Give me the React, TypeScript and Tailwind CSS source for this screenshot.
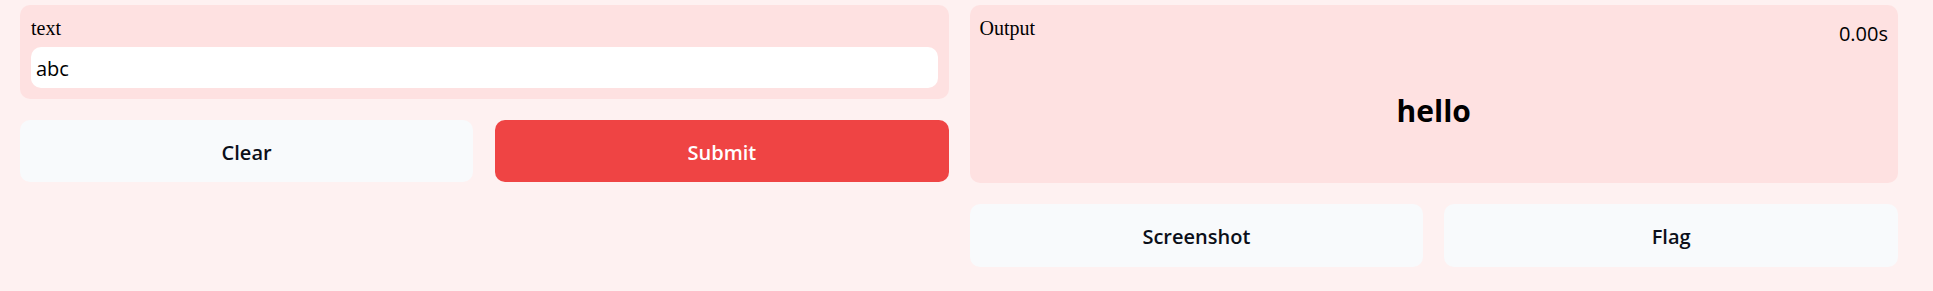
import React from 'react';

const sans = "font-['Open_Sans','Noto_Sans',sans-serif]";
const serif = "font-['Liberation_Serif','Times_New_Roman',serif]";

function Button({ label, primary, tall }: { label: string; primary?: boolean; tall?: boolean }) {
  return (
    <button
      className={`flex-1 ${tall ? 'h-[63px]' : 'h-[62px]'} rounded-[10px] pt-[3px] text-[20px] font-semibold ${sans} ${
        primary ? 'bg-[#ef4444] text-white' : 'bg-[#f8fafc] text-[#0b0f19]'
      }`}
    >
      {label}
    </button>
  );
}

export default function App() {
  return (
    <div className="min-h-[291px] w-full bg-[#fef1f1] pl-[20px] pr-[35px] pt-[5px]">
      <div className="flex gap-[21px]">
        {/* Inputs column */}
        <div className="flex flex-1 flex-col gap-[21px]">
          <div className="rounded-[10px] bg-[#fee1e1] px-[11px] pt-[12px] pb-[11px]">
            <div className={`${serif} text-[20px] leading-[23px] text-black`}>text</div>
            <input
              readOnly
              value="abc"
              className={`${sans} mt-[7px] block h-[41px] w-full rounded-[10px] bg-white px-[5px] pt-[2px] text-[20px] text-black outline-none`}
            />
          </div>
          <div className="flex gap-[22px]">
            <Button label="Clear" />
            <Button label="Submit" primary />
          </div>
        </div>

        {/* Output column */}
        <div className="flex flex-1 flex-col gap-[21px]">
          <div className="flex h-[178px] flex-col rounded-[10px] bg-[#fee1e1] px-[10px] pt-[12px]">
            <div className="flex items-start justify-between">
              <span className={`${serif} text-[20px] leading-[23px] text-black`}>Output</span>
              <span className={`${sans} mt-[4px] text-[20px] leading-[26px] text-black`}>0.00s</span>
            </div>
            <div className="flex flex-1 items-center justify-center pb-[9px]">
              <span className={`${sans} text-[30px] font-bold text-black`}>hello</span>
            </div>
          </div>
          <div className="flex gap-[21px]">
            <Button label="Screenshot" tall />
            <Button label="Flag" tall />
          </div>
        </div>
      </div>
    </div>
  );
}
